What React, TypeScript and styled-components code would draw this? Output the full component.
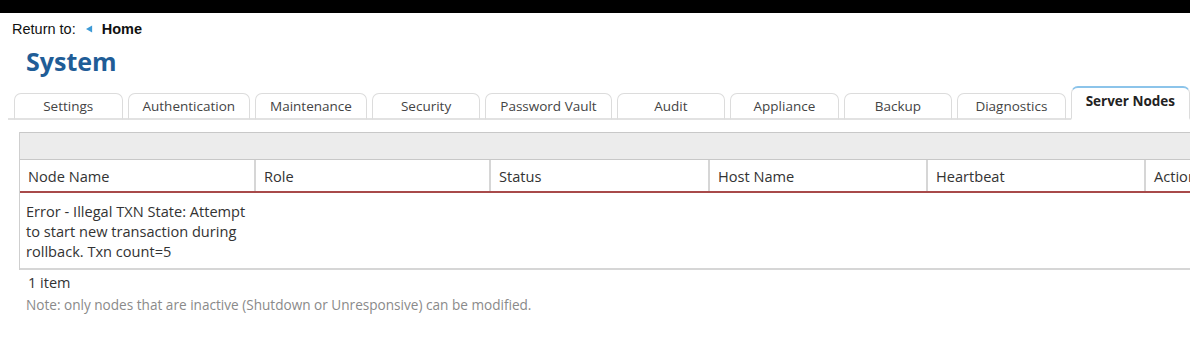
import styled, { createGlobalStyle } from 'styled-components'

const GlobalStyle = createGlobalStyle`
    body {
        margin: 0;
        background: #fff;
        overflow: hidden;
        font-family: "Open Sans", "Liberation Sans", sans-serif;
    }
`

export default function App() {

    const tabs = [
        "Settings", "Authentication", "Maintenance", "Security", "Password Vault",
        "Audit", "Appliance", "Backup", "Diagnostics", "Server Nodes"
    ]

    const columns = [
        { name: "Node Name", width: 236 },
        { name: "Role", width: 235 },
        { name: "Status", width: 219 },
        { name: "Host Name", width: 218 },
        { name: "Heartbeat", width: 218 },
        { name: "Actions", width: 120 }
    ]

    return (
        <>
            <GlobalStyle />
            <TopBar />
            <ReturnRow>
                Return to:
                <BackArrow viewBox="0 0 8 8">
                    <polygon points="0,4 7,0 7,8" fill="#3d9ad6" />
                </BackArrow>
                <HomeLink>Home</HomeLink>
            </ReturnRow>
            <Title>System</Title>
            <TabStrip>
                {tabs.map((tab) => (
                    <Tab key={tab} $active={tab === "Server Nodes"}>{tab}</Tab>
                ))}
            </TabStrip>
            <Grid>
                <Toolbar />
                <HeaderRow>
                    {columns.map((col) => (
                        <HeaderCell key={col.name} style={{ width: col.width }}>{col.name}</HeaderCell>
                    ))}
                </HeaderRow>
                <DataRow>
                    <DataCell style={{ width: columns[0].width }}>
                        Error - Illegal TXN State: Attempt to start new transaction during rollback. Txn count=5
                    </DataCell>
                </DataRow>
            </Grid>
            <Count>1 item</Count>
            <Note>Note: only nodes that are inactive (Shutdown or Unresponsive) can be modified.</Note>
        </>
    )
}

const TopBar = styled.div`
    height: 13px;
    background: #000;
`

const ReturnRow = styled.div`
    display: flex;
    align-items: center;
    height: 32px;
    padding-left: 12px;
    font-family: "Liberation Sans", Arial, sans-serif;
    font-size: 14.5px;
    color: #111;
`

const BackArrow = styled.svg`
    width: 7px;
    height: 8px;
    margin: 0 9px 0 10px;
`

const HomeLink = styled.span`
    font-weight: bold;
`

const Title = styled.h1`
    margin: 0;
    padding: 0 0 0 26px;
    height: 40px;
    line-height: 32px;
    font-size: 25px;
    font-weight: 700;
    color: #1f5d97;
`

const TabStrip = styled.div`
    display: flex;
    align-items: flex-end;
    gap: 5px;
    margin-left: 8px;
    padding-left: 6px;
    height: 33px;
    border-bottom: 2px solid #e2e2e2;
`

const Tab = styled.div<{ $active?: boolean }>`
    box-sizing: border-box;
    min-width: 108.5px;
    padding: 0 14px;
    height: ${(p) => (p.$active ? '34px' : '27px')};
    margin-bottom: -2px;
    display: flex;
    align-items: center;
    justify-content: center;
    padding-bottom: ${(p) => (p.$active ? '5px' : '0')};
    font-size: 13.5px;
    font-weight: ${(p) => (p.$active ? 700 : 400)};
    color: ${(p) => (p.$active ? '#222' : '#444')};
    background: #fff;
    border: 1px solid #dcdcdc;
    border-top: ${(p) => (p.$active ? '2px solid #8cc4ea' : '1px solid #dcdcdc')};
    border-bottom: ${(p) => (p.$active ? '2px solid #fff' : '2px solid #e2e2e2')};
    border-radius: 7px 7px 0 0;
    white-space: nowrap;
`

const Grid = styled.div`
    margin: 12px 0 0 19px;
    width: 1260px;
    border-left: 1px solid #cfcfcf;
`

const Toolbar = styled.div`
    height: 26px;
    background: #ececec;
    border-top: 1px solid #c8c8c8;
    border-bottom: 1px solid #c8c8c8;
`

const HeaderRow = styled.div`
    display: flex;
    height: 31px;
    border-bottom: 2px solid #a84a4a;
`

const HeaderCell = styled.div`
    box-sizing: border-box;
    display: flex;
    align-items: center;
    padding-left: 8px;
    font-size: 14.6px;
    color: #333;
    border-right: 2px solid #d6d6d6;
`

const DataRow = styled.div`
    display: flex;
    height: 75px;
    border-bottom: 2px solid #d6d6d6;
`

const DataCell = styled.div`
    box-sizing: border-box;
    padding: 8px 6px 0 6px;
    font-size: 14.6px;
    line-height: 20px;
    color: #333;
`

const Count = styled.div`
    margin: 4px 0 0 28px;
    font-size: 14.5px;
    line-height: 18px;
    color: #333;
`

const Note = styled.div`
    margin: 3px 0 0 26px;
    font-size: 13.6px;
    line-height: 19px;
    color: #8a8a8a;
`
